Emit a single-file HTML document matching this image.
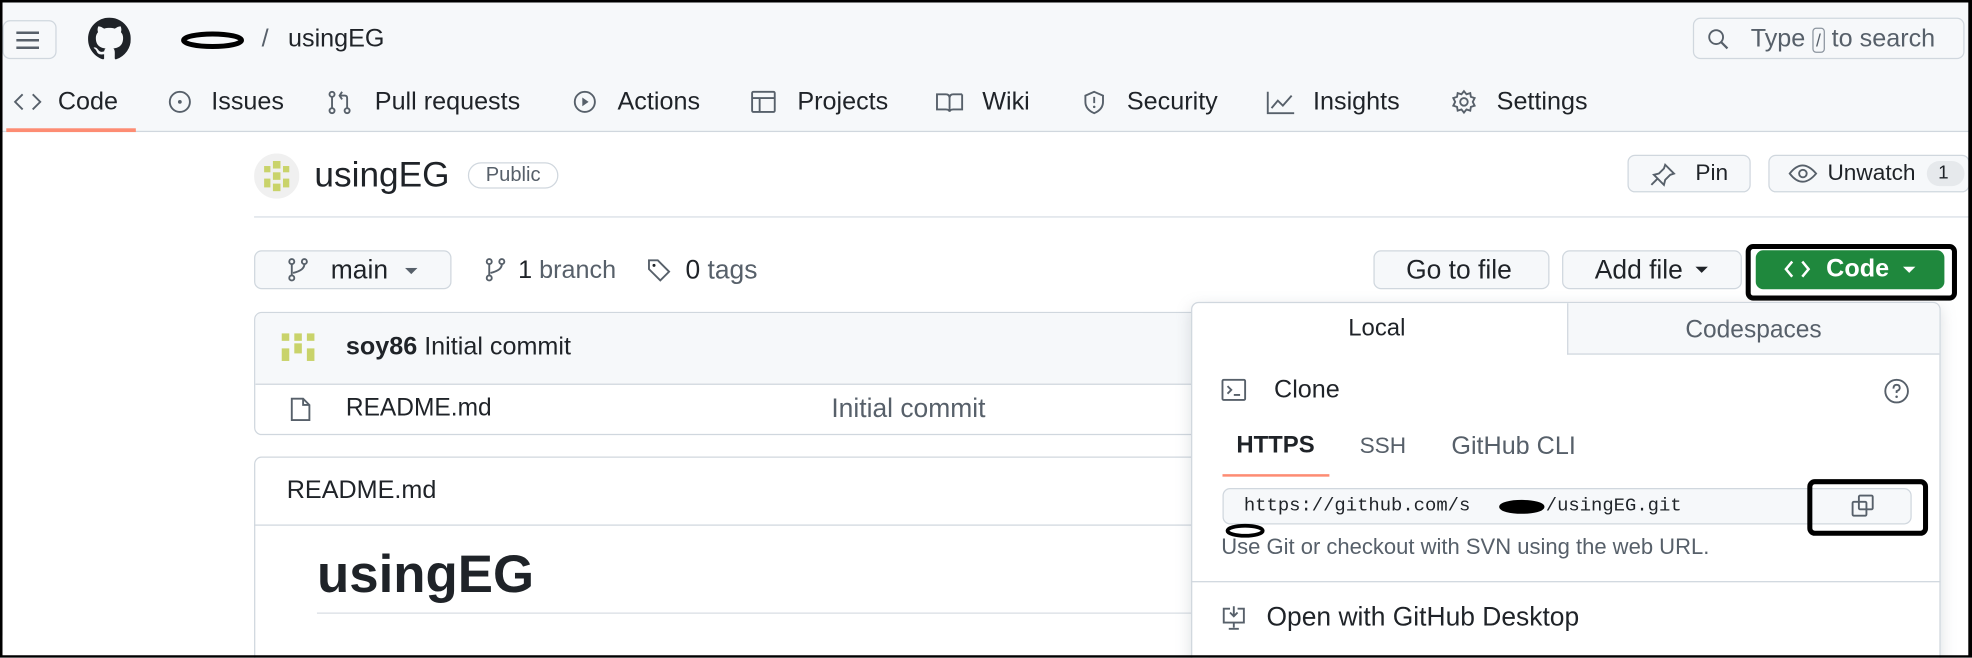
<!DOCTYPE html>
<html><head><meta charset="utf-8"><style>
*{box-sizing:border-box;margin:0;padding:0}
html,body{width:1972px;height:658px;overflow:hidden;background:#fff}
#w{position:absolute;left:0;top:0;width:1568px;height:523px;overflow:hidden;transform:scale(1.2577);transform-origin:0 0;font-family:"Liberation Sans",sans-serif;color:#1f2328;background:#fff}
.a{position:absolute;white-space:nowrap}
.t{position:absolute;white-space:nowrap;transform:translateY(-50%);line-height:1.2}
.btn{position:absolute;border:1px solid #d0d7de;border-radius:6px;background:#f6f8fa}
svg{position:absolute}
.ic{fill:none;stroke:#57606a;stroke-width:1.5}
</style></head><body><div id="w">
<!-- header -->
<div class="a" style="left:0;top:0;width:1568px;height:105px;background:#f6f8fa;border-bottom:1px solid #d0d7de"></div>
<div class="btn" style="left:2px;top:16px;width:43px;height:31px"></div>
<svg style="left:12px;top:24px" width="20" height="16"><path d="M1 2h18M1 8h18M1 14h18" stroke="#57606a" stroke-width="2"/></svg>
<svg style="left:70px;top:14px" width="34" height="34" viewBox="0 0 16 16"><path fill="#1f2328" d="M8 0C3.58 0 0 3.58 0 8c0 3.540 2.29 6.53 5.47 7.59.4.07.55-.17.55-.38 0-.19-.01-.82-.01-1.49-2.01.37-2.53-.49-2.69-.94-.09-.23-.48-.94-.82-1.130-.28-.15-.68-.52-.01-.53.63-.01 1.08.58 1.23.82.72 1.21 1.87.87 2.33.66.07-.52.28-.87.51-1.07-1.78-.2-3.64-.89-3.64-3.95 0-.87.31-1.59.82-2.15-.08-.2-.36-1.02.08-2.12 0 0 .67-.21 2.2.82.64-.18 1.32-.27 2-.27.68 0 1.36.09 2 .27 1.53-1.04 2.2-.82 2.2-.82.44 1.1.16 1.92.08 2.12.51.56.82 1.27.82 2.15 0 3.07-1.87 3.75-3.65 3.95.29.25.54.73.54 1.48 0 1.07-.01 1.93-.01 2.2 0 .21.15.46.55.38A8.013 8.013 0 0016 8c0-4.42-3.58-8-8-8z"/></svg>
<svg style="left:143px;top:24px" width="52" height="16"><ellipse cx="26" cy="8" rx="23" ry="5" fill="none" stroke="#000" stroke-width="4"/></svg>
<div class="t" style="left:208px;top:31px;font-size:20px;color:#57606a">/</div>
<div class="t" style="left:229px;top:31px;font-size:20px">usingEG</div>
<div class="a" style="left:1346px;top:14px;width:216px;height:33px;border:1px solid #d0d7de;border-radius:6px;background:#f6f8fa"></div>
<svg style="left:1357px;top:22px" width="18" height="18"><circle cx="7.5" cy="7.5" r="5.5" class="ic" stroke-width="1.8"/><path d="M11.5 11.5l5 5" stroke="#57606a" stroke-width="1.8"/></svg>
<div class="t" style="left:1392px;top:31px;font-size:20px;color:#57606a">Type <span style="display:inline-block;border:1px solid #8c959f;border-radius:3px;font-size:14px;padding:0 2px;line-height:18px">/</span> to search</div>
<!-- nav -->
<div class="a" style="left:5px;top:102px;width:103px;height:3px;background:#fd8c73"></div>
<svg style="left:10px;top:73px" width="24" height="16"><path d="M8 2L2 8l6 6M16 2l6 6-6 6" class="ic" stroke="#1f2328"/></svg>
<div class="t" style="left:46px;top:81px;font-size:20px">Code</div>
<svg style="left:133px;top:72px" width="22" height="22"><circle cx="10" cy="9" r="8" class="ic"/><circle cx="10" cy="9" r="1.5" fill="#57606a"/></svg>
<div class="t" style="left:168px;top:81px;font-size:20px">Issues</div>
<svg style="left:260px;top:72px" width="24" height="20"><circle cx="4" cy="3" r="2" class="ic"/><circle cx="4" cy="16" r="2" class="ic"/><circle cx="16" cy="16" r="2" class="ic"/><path d="M4 5v9M16 14V6q0-2-2-2h-4M12 1l-2 3 2 3" class="ic"/></svg>
<div class="t" style="left:298px;top:81px;font-size:20px">Pull requests</div>
<svg style="left:455px;top:72px" width="22" height="22"><circle cx="10" cy="9" r="8" class="ic"/><path d="M8 5.5v7l5-3.5z" fill="#57606a"/></svg>
<div class="t" style="left:491px;top:81px;font-size:20px">Actions</div>
<svg style="left:597px;top:72px" width="22" height="22"><rect x="1" y="1" width="18" height="16" rx="1" class="ic"/><path d="M1 6h18M7 6v11" class="ic"/></svg>
<div class="t" style="left:634px;top:81px;font-size:20px">Projects</div>
<svg style="left:744px;top:73px" width="24" height="20"><path d="M1 2h7q3 0 3 3v11q0-2-3-2H1zM21 2h-7q-3 0-3 3M21 2v12h-7q-3 0-3 2" class="ic"/></svg>
<div class="t" style="left:781px;top:81px;font-size:20px">Wiki</div>
<svg style="left:861px;top:72px" width="20" height="22"><path d="M9 1l7 3v5q0 6-7 9-7-3-7-9V4z" class="ic"/><path d="M9 5v5" class="ic"/><circle cx="9" cy="13" r="1" fill="#57606a"/></svg>
<div class="t" style="left:896px;top:81px;font-size:20px">Security</div>
<svg style="left:1007px;top:72px" width="24" height="20"><path d="M1 1v17h21M4 14l5-6 4 4 7-8" class="ic"/></svg>
<div class="t" style="left:1044px;top:81px;font-size:20px">Insights</div>
<svg style="left:1154px;top:71px" width="22" height="22"><circle cx="10" cy="10" r="3" class="ic"/><path d="M10 1.5l2 2.5 3-1 .5 3 3 1-1.5 3 1.5 3-3 1-.5 3-3-1-2 2.5-2-2.5-3 1-.5-3-3-1 1.5-3-1.5-3 3-1 .5-3 3 1z" class="ic"/></svg>
<div class="t" style="left:1190px;top:81px;font-size:20px">Settings</div>
<!-- repo title -->
<svg style="left:202px;top:122px" width="36" height="36"><circle cx="18" cy="18" r="18" fill="#f0f0f0"/><rect x="8" y="10" width="5" height="5" fill="#c9d36a"/><rect x="15" y="6" width="6" height="6" fill="#c9d36a"/><rect x="23" y="10" width="5" height="5" fill="#c9d36a"/><rect x="8" y="20" width="5" height="7" fill="#c9d36a"/><rect x="15" y="15" width="6" height="6" fill="#c9d36a"/><rect x="23" y="20" width="5" height="7" fill="#c9d36a"/><rect x="15" y="24" width="6" height="6" fill="#c9d36a"/></svg>
<div class="t" style="left:250px;top:139px;font-size:28px">usingEG</div>
<div class="a" style="left:372px;top:129px;width:72px;height:21px;border:1px solid #d0d7de;border-radius:12px;font-size:16px;color:#57606a;text-align:center;line-height:19px">Public</div>
<div class="btn" style="left:1294px;top:123px;width:98px;height:30px"></div>
<svg style="left:1312px;top:129px" width="22" height="20"><path d="M12 2l7 7-3 1-4 4-1 4-8-8 4-1 4-4zM6 13l-5 5" class="ic"/></svg>
<div class="t" style="left:1348px;top:138px;font-size:18px">Pin</div>
<div class="btn" style="left:1406px;top:123px;width:160px;height:30px"></div>
<svg style="left:1422px;top:129px" width="24" height="18"><path d="M1 9q10-13 21 0-11 13-21 0z" class="ic"/><circle cx="11.5" cy="9" r="3" class="ic"/></svg>
<div class="t" style="left:1453px;top:138px;font-size:18px">Unwatch</div>
<div class="a" style="left:1532px;top:128px;width:30px;height:20px;border-radius:10px;background:#e6e9ec;font-size:15px;line-height:20px;padding-left:9px">1</div>
<div class="a" style="left:202px;top:172px;width:1366px;height:1px;background:#d8dee4"></div>
<!-- branch row -->
<div class="btn" style="left:202px;top:199px;width:157px;height:31px"></div>
<svg style="left:228px;top:205px" width="18" height="20"><circle cx="4" cy="3" r="2" class="ic" stroke="#1f2328"/><circle cx="4" cy="16" r="2" class="ic" stroke="#1f2328"/><circle cx="14" cy="3" r="2" class="ic" stroke="#1f2328"/><path d="M4 5v9M14 5q0 5-9 7" class="ic" stroke="#1f2328"/></svg>
<div class="t" style="left:263px;top:215px;font-size:21px">main</div>
<svg style="left:322px;top:213px" width="10" height="6"><path d="M0 0h10L5 5z" fill="#57606a"/></svg>
<svg style="left:385px;top:205px" width="18" height="20"><circle cx="4" cy="3" r="2" class="ic" stroke="#1f2328"/><circle cx="4" cy="16" r="2" class="ic" stroke="#1f2328"/><circle cx="14" cy="3" r="2" class="ic" stroke="#1f2328"/><path d="M4 5v9M14 5q0 5-9 7" class="ic" stroke="#1f2328"/></svg>
<div class="t" style="left:412px;top:215px;font-size:20px">1 <span style="color:#57606a">branch</span></div>
<svg style="left:514px;top:205px" width="22" height="20"><path d="M2 2h7l9 9-7 7-9-9z" class="ic" stroke="#1f2328"/><circle cx="6" cy="6" r="1.2" fill="#1f2328"/></svg>
<div class="t" style="left:545px;top:215px;font-size:21px">0 <span style="color:#57606a">tags</span></div>
<div class="btn" style="left:1092px;top:199px;width:140px;height:31px"></div>
<div class="t" style="left:1118px;top:215px;font-size:21px">Go to file</div>
<div class="btn" style="left:1242px;top:199px;width:143px;height:31px"></div>
<div class="t" style="left:1268px;top:215px;font-size:21px">Add file</div>
<svg style="left:1348px;top:212px" width="10" height="6"><path d="M0 0h10L5 5z" fill="#1f2328"/></svg>
<div class="a" style="left:1388px;top:194px;width:168px;height:45px;border:4px solid #000;border-radius:6px"></div>
<div class="a" style="left:1396px;top:199px;width:150px;height:31px;background:#1f883d;border-radius:6px"></div>
<svg style="left:1418px;top:206px" width="22" height="16"><path d="M7 2L2 8l5 6M15 2l5 6-5 6" fill="none" stroke="#fff" stroke-width="2"/></svg>
<div class="t" style="left:1452px;top:214px;font-size:20px;color:#fff;font-weight:bold">Code</div>
<svg style="left:1513px;top:212px" width="10" height="6"><path d="M0 0h10L5 5z" fill="#fff"/></svg>
<!-- files box -->
<div class="a" style="left:202px;top:248px;width:760px;height:98px;border:1px solid #d0d7de;border-radius:6px;overflow:hidden"><div style="height:57px;background:#f6f8fa;border-bottom:1px solid #d0d7de"></div></div>
<svg style="left:222px;top:265px" width="32" height="24"><rect x="2" y="0" width="6" height="6" fill="#c9d36a"/><rect x="12" y="0" width="6" height="6" fill="#c9d36a"/><rect x="22" y="0" width="6" height="6" fill="#c9d36a"/><rect x="2" y="12" width="6" height="10" fill="#c9d36a"/><rect x="12" y="8" width="6" height="8" fill="#c9d36a"/><rect x="22" y="12" width="6" height="10" fill="#c9d36a"/></svg>
<div class="t" style="left:275px;top:276px;font-size:20px"><b>soy86</b> Initial commit</div>
<svg style="left:230px;top:316px" width="18" height="20"><path d="M2 1h9l5 5v12H2z" class="ic"/><path d="M11 1v5h5" class="ic"/></svg>
<div class="t" style="left:275px;top:325px;font-size:19.5px">README.md</div>
<div class="t" style="left:661px;top:325px;font-size:21px;color:#57606a">Initial commit</div>
<div class="a" style="left:202px;top:363px;width:760px;height:170px;border:1px solid #d0d7de;border-radius:6px"></div>
<div class="a" style="left:202px;top:417px;width:760px;height:1px;background:#d0d7de"></div>
<div class="t" style="left:228px;top:390px;font-size:20px">README.md</div>
<div class="t" style="left:252px;top:457px;font-size:42px;font-weight:bold">usingEG</div>
<div class="a" style="left:252px;top:487px;width:700px;height:1px;background:#d8dee4"></div>
<!-- dropdown -->
<div class="a" style="left:947px;top:240px;width:596px;height:300px;background:#fff;border:1px solid #d0d7de;border-radius:6px;box-shadow:0 4px 12px rgba(140,149,159,.3);overflow:hidden">
 <div style="position:absolute;left:298px;top:0;width:300px;height:41px;background:#f6f8fa;border-left:1px solid #d0d7de;border-bottom:1px solid #d0d7de"></div>
</div>
<div class="t" style="left:1072px;top:262px;font-size:19px;color:#1f2328">Local</div>
<div class="t" style="left:1340px;top:263px;font-size:19.5px;color:#57606a">Codespaces</div>
<svg style="left:971px;top:301px" width="22" height="20"><rect x="1" y="1" width="18" height="16" rx="1" class="ic" stroke="#1f2328"/><path d="M5 6l3 3-3 3M10 13h5" class="ic" stroke="#1f2328"/></svg>
<div class="t" style="left:1013px;top:310px;font-size:20px">Clone</div>
<svg style="left:1497px;top:300px" width="22" height="22"><circle cx="11" cy="11" r="9" class="ic"/><path d="M8.5 9q0-3 2.5-3t2.5 2.5q0 1.5-2.5 2.5v1.5" class="ic"/><circle cx="11" cy="15.5" r="1" fill="#57606a"/></svg>
<div class="t" style="left:983px;top:355px;font-size:19px;font-weight:bold">HTTPS</div>
<div class="t" style="left:1081px;top:355px;font-size:18px;color:#57606a">SSH</div>
<div class="t" style="left:1154px;top:355px;font-size:20px;color:#57606a">GitHub CLI</div>
<div class="a" style="left:972px;top:377px;width:85px;height:2px;background:#fd8c73"></div>
<div class="a" style="left:972px;top:388px;width:548px;height:29px;border:1px solid #d0d7de;border-radius:6px;background:#f6f8fa"></div>
<div class="a" style="left:1438px;top:388px;width:1px;height:29px;background:#d0d7de"></div>
<div class="t" style="left:989px;top:403px;font-family:'Liberation Mono',monospace;font-size:15px">https://github.com/s<span style="display:inline-block;width:60px"></span>/usingEG.git</div>
<svg style="left:1188px;top:395px" width="44" height="16"><ellipse cx="22" cy="8" rx="17" ry="4.5" fill="#000" stroke="#000" stroke-width="2"/></svg>
<svg style="left:972px;top:414px" width="38" height="16"><ellipse cx="18" cy="8" rx="14" ry="4" fill="none" stroke="#000" stroke-width="3"/></svg>
<div class="a" style="left:1437px;top:381px;width:96px;height:45px;border:4px solid #000;border-radius:6px"></div>
<svg style="left:1472px;top:393px" width="22" height="20"><rect x="1" y="6" width="11" height="11" rx="1" class="ic"/><rect x="6" y="1" width="11" height="11" rx="1" class="ic"/></svg>
<div class="t" style="left:971px;top:435px;font-size:17.5px;color:#57606a">Use Git or checkout with SVN using the web URL.</div>
<div class="a" style="left:947px;top:462px;width:596px;height:1px;background:#d0d7de"></div>
<svg style="left:971px;top:481px" width="22" height="22"><path d="M7 3H2v11h16V3h-5M10 1v8M7 6l3 3 3-3M10 14v4M6 19h8" class="ic" stroke="#1f2328"/></svg>
<div class="t" style="left:1007px;top:491px;font-size:21px">Open with GitHub Desktop</div>
<!-- frame -->
<div class="a" style="left:0;top:0;width:1568px;height:523px;border:2px solid #000;border-right-width:3px"></div>
</div></body></html>
